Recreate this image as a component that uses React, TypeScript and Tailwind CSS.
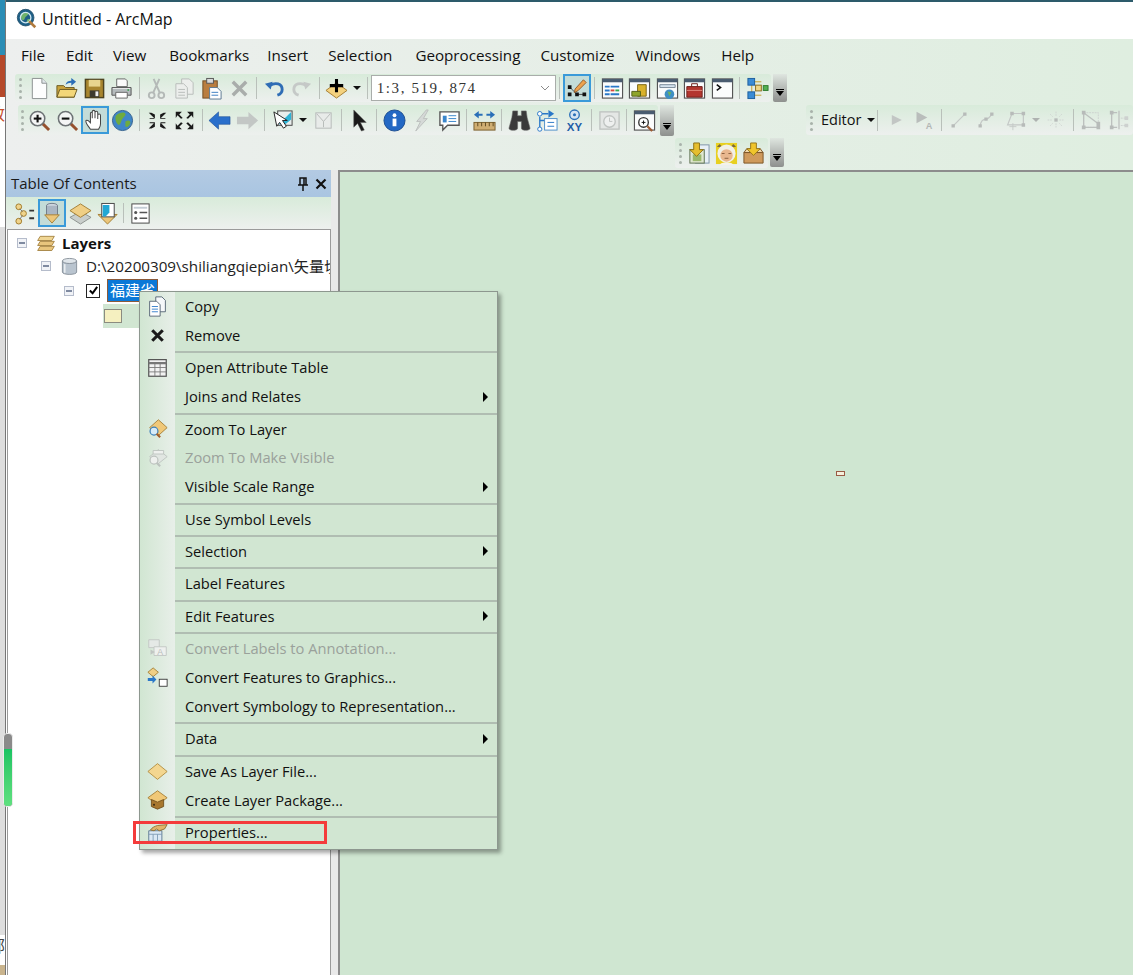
import type { ReactNode } from 'react'

function I({ children, s = 23 }: { children: ReactNode; s?: number }) {
  return (
    <svg viewBox="0 0 24 24" width={s} height={s} className="block shrink-0">
      {children}
    </svg>
  )
}

const icons: Record<string, ReactNode> = {
  logo: (
    <>
      <circle cx="11" cy="11" r="9.5" fill="#1d5f86" stroke="#24506b" />
      <path d="M5 8c3-4 8-4 9-2s-3 3-4 6-4 3-5-4zM13 13c3-1 5 0 4 2s-4 3-5 1z" fill="#6fb36b" />
      <circle cx="11" cy="11" r="6" fill="none" stroke="#cfe7f3" strokeWidth="1.5" />
      <path d="M15 15l7 7" stroke="#b07a3c" strokeWidth="3" />
    </>
  ),
  new: (
    <>
      <path d="M4.5 1.5h10l5 5v16h-15z" fill="#fdfdfd" stroke="#8a8f8f" />
      <path d="M14.5 1.5v5h5" fill="#e2e8ec" stroke="#8a8f8f" />
    </>
  ),
  open: (
    <>
      <path d="M2 21V9h7l2 2h9v10z" fill="#c9a33e" stroke="#6b5a22" />
      <path d="M2 21l3-8h18l-3 8z" fill="#f3d779" stroke="#6b5a22" />
      <path d="M11 8c1-3 3-4 6-4V1l5 4-5 4V6c-3 0-4 1-6 2z" fill="#2b6fb8" />
    </>
  ),
  save: (
    <>
      <rect x="2.5" y="2.5" width="19" height="19" fill="#a8862f" stroke="#4e4420" strokeWidth="1.5" />
      <rect x="6" y="3" width="12" height="7" fill="#e8d58e" />
      <rect x="7" y="14" width="10" height="7" fill="#3c3a30" />
      <rect x="13" y="15" width="3" height="5" fill="#eee" />
    </>
  ),
  print: (
    <>
      <path d="M7 10V2h9l2 2v6z" fill="#fafafa" stroke="#666" />
      <path d="M2 11h20v8H2z" fill="#b5bbbd" stroke="#555" />
      <path d="M6 16h12v6H6z" fill="#fff" stroke="#666" />
      <path d="M3 12h18" stroke="#e6e8e8" />
      <circle cx="19" cy="13.5" r="1" fill="#46a15a" />
    </>
  ),
  cut: (
    <g fill="none" stroke="#b4b9b7" strokeWidth="2">
      <circle cx="7" cy="19" r="3" />
      <circle cx="17" cy="19" r="3" />
      <path d="M8.5 16.5L15 2M15.5 16.5L9 2" />
    </g>
  ),
  copyOff: (
    <g fill="#eceeec" stroke="#b8bcba">
      <path d="M9 2h8l4 4v12H9z" />
      <path d="M3 7h8l4 4v11H3z" />
      <path d="M5.5 13h7M5.5 16h7M5.5 19h7" />
    </g>
  ),
  paste: (
    <>
      <rect x="3" y="4" width="15" height="18" fill="#b97d3f" stroke="#704c24" />
      <rect x="7" y="1.5" width="7" height="5" fill="#d9d9d9" stroke="#555" />
      <path d="M10 11h8l4 4v8H10z" fill="#fff" stroke="#5a7891" />
      <path d="M12 16h7M12 19h7" stroke="#3b7cc0" />
    </>
  ),
  del: <path d="M5 5l14 14M19 5L5 19" stroke="#a9adab" strokeWidth="3.6" />,
  undo: (
    <>
      <path d="M7 9c6-4 13-2 13 4 0 3-2 5-5 6" fill="none" stroke="#2f6db5" strokeWidth="3" />
      <path d="M2 7l8-2-2 8z" fill="#2f6db5" />
    </>
  ),
  redo: (
    <>
      <path d="M17 9c-6-4-13-2-13 4 0 3 2 5 5 6" fill="none" stroke="#c5c9c7" strokeWidth="3" />
      <path d="M22 7l-8-2 2 8z" fill="#c5c9c7" />
    </>
  ),
  add: (
    <>
      <path d="M12 6l11 8-11 8L1 14z" fill="#f4d27f" stroke="#a57d33" />
      <path d="M12 2v14M5 9h14" stroke="#000" strokeWidth="3.2" />
    </>
  ),
  edit: (
    <>
      <path d="M4 11l8 8h8" fill="none" stroke="#444" />
      <path d="M2 9h4v4H2zM2 17h4v4H2zM10 17h4v4h-4zM18 17h4v4h-4z" fill="#111" />
      <path d="M10 13l9-10 3 3-9 9-4 2z" fill="#eda24e" stroke="#8e5a28" />
    </>
  ),
  winA: <Win><path d="M4 9h5v2H4zM4 13h5v2H4zM4 17h5v2H4z" fill="#2a78c8" /><path d="M10 9h9v2h-9zM10 17h9v2h-9z" fill="#2a78c8" /><path d="M10 13h4v2h-4z" fill="#d9463c" /><path d="M15 13h4v2h-4z" fill="#3aa552" /></Win>,
  winB: <Win><path d="M10 8h9v12h-9z" fill="#d9b22c" stroke="#7a6415" /><path d="M4 15h9v5H4z" fill="#8fa52a" stroke="#54601a" /></Win>,
  winC: <Win><path d="M4 8h16v3H4z" fill="#d5e2ee" stroke="#7a8a99" /><circle cx="14" cy="18" r="5" fill="#3f8fc4" /><path d="M12 15l4 1-2 4z" fill="#6bb25e" /></Win>,
  winD: <Win><path d="M4 10h16v11H4z" fill="#b3362f" stroke="#6f1f1b" /><path d="M9 10V7h6v3" fill="none" stroke="#6f1f1b" /><path d="M4 14h16" stroke="#e08a80" /></Win>,
  winE: <Win><path d="M6 8l4 3-4 3" fill="none" stroke="#111" strokeWidth="1.6" /></Win>,
  model: (
    <>
      <path d="M8 5h8M8 19h8M6 8v8" stroke="#c49d2e" fill="none" />
      <rect x="2" y="1.5" width="7" height="7" fill="#3a8bd5" stroke="#1d5f9e" />
      <rect x="2" y="15.5" width="7" height="7" fill="#3a8bd5" stroke="#1d5f9e" />
      <rect x="10" y="8.5" width="6" height="6" fill="#f0d684" stroke="#8a6b1e" />
      <rect x="18" y="9" width="5" height="5" fill="#52b052" stroke="#2c7a2c" />
    </>
  ),
  zin: <Lens plus />,
  zout: <Lens />,
  hand: (
    <path
      d="M7 22c-2-3-5-6-5-9 0-1 2-1 3 0l2 2V5c0-2 2-2 2 0v5V3c0-2 3-2 3 0v7V4c0-2 3-2 3 0v7-4c0-2 3-2 3 0v9c0 3-1 4-2 6z"
      fill="#fff"
      stroke="#444"
      strokeWidth="1.1"
    />
  ),
  globe: (
    <>
      <circle cx="12" cy="12" r="10.5" fill="#3f86c8" stroke="#35618c" />
      <path d="M5 7c4-4 9-4 10-2s-3 4-4 7-2 6-4 4-3-6-2-9zM15 13c3-2 6-1 5 2s-4 5-5 3z" fill="#6fab3f" />
    </>
  ),
  fixIn: (
    <path
      d="M2 3l7 7V5L5 3zM22 3l-7 7V5l4-2zM2 21l7-7v5l-4 2zM22 21l-7-7v5l4 2zM3 9h6v1H3zM15 9h6v1h-6zM3 14h6v1H3zM15 14h6v1h-6z"
      fill="#1a1a1a"
    />
  ),
  fixOut: (
    <path
      d="M2 2h7L6 5l4 4-2 1-4-4-2 3zM22 2h-7l3 3-4 4 2 1 4-4 2 3zM2 22h7l-3-3 4-4-2-1-4 4-2-3zM22 22h-7l3-3-4-4 2-1 4 4 2-3z"
      fill="#1a1a1a"
    />
  ),
  back: <path d="M1 12l10-9v5h12v8H11v5z" fill="#2a6fcb" stroke="#1d4d94" strokeWidth=".6" />,
  forward: <path d="M23 12l-10-9v5H1v8h12v5z" fill="#c3c7c5" />,
  selEl: (
    <>
      <rect x="7" y="2" width="15" height="15" fill="#e9eeec" stroke="#444" />
      <path d="M8 16L21 3v8l-6 5z" fill="#2fb4d6" />
      <path d="M3 3l3 15 3-4 4 6 3-2-4-6h5z" fill="#fff" stroke="#222" />
    </>
  ),
  clearSel: (
    <>
      <rect x="4" y="4" width="16" height="16" fill="#e8ebe9" stroke="#b6bab8" />
      <path d="M5 5l7 8 7-8M12 13v6" fill="none" stroke="#b6bab8" />
    </>
  ),
  arrow: <path d="M6 1l13 13h-6l4 8-3 1-4-8-4 4z" fill="#1a1a1a" stroke="#555" strokeWidth=".5" />,
  info: (
    <>
      <circle cx="12" cy="12" r="11" fill="#2368c4" stroke="#1c4d8f" />
      <circle cx="12" cy="6.5" r="2" fill="#fff" />
      <path d="M10 10h4v8h-4z" fill="#fff" />
    </>
  ),
  bolt: <path d="M17 1L7 13h4L6 23l12-13h-4l5-9z" fill="#d5d9d7" stroke="#bcc0be" />,
  popup: (
    <>
      <path d="M2 3h20v14H10l-5 5v-5H2z" fill="#fff" stroke="#555" strokeWidth="1.4" />
      <path d="M5 7h4v7H5z" fill="#3a86cc" />
      <path d="M11 7h8M11 10h8M11 13h8" stroke="#3a86cc" />
    </>
  ),
  measure: (
    <>
      <path d="M1 6l5-4v3h4v2H6v3zM23 6l-5-4v3h-4v2h4v3z" fill="#2a6fb8" />
      <rect x="1" y="14" width="22" height="8" fill="#cfae72" stroke="#7a5f2c" />
      <path d="M5 14v4M9 14v4M13 14v4M17 14v4M21 14v4" stroke="#5e4820" />
    </>
  ),
  find: (
    <path
      d="M5 2h5v5h4V2h5l1 7 3 11c0 3-9 3-9 0v-7h-4v7c0 3-9 3-9 0l3-11z"
      fill="#3a3a3a"
      stroke="#666"
      strokeWidth=".6"
    />
  ),
  route: (
    <>
      <path d="M5 8v12M5 12h6M6 5h8" stroke="#2a78c8" fill="none" strokeWidth="1.4" />
      <path d="M14 1l6 4-6 4z" fill="#2a78c8" />
      <rect x="10" y="10" width="13" height="12" fill="#fff" stroke="#4e8fc9" />
      <path d="M13 14h7M13 18h7" stroke="#2a78c8" />
      <circle cx="5" cy="5" r="2.4" fill="#fff" stroke="#2a78c8" />
      <circle cx="5" cy="21" r="2.2" fill="#fff" stroke="#2a78c8" />
    </>
  ),
  xy: (
    <>
      <circle cx="12" cy="6" r="5" fill="#d5e4f2" stroke="#2a6fb8" strokeWidth="1.4" />
      <circle cx="12" cy="6" r="1.6" fill="#2a6fb8" />
      <text x="12" y="23" textAnchor="middle" fontSize="12" fontWeight="700" fill="#1f5fa8" fontFamily="Liberation Sans">XY</text>
    </>
  ),
  time: (
    <>
      <rect x="2" y="3" width="20" height="18" fill="#e4e7e5" stroke="#bfc3c1" strokeWidth="1.4" />
      <circle cx="12" cy="13" r="6" fill="#eef0ef" stroke="#bfc3c1" strokeWidth="1.4" />
      <path d="M12 9v4h3" stroke="#bfc3c1" fill="none" />
    </>
  ),
  viewer: <Win><circle cx="11" cy="14" r="5" fill="#fff" stroke="#333" strokeWidth="1.4" /><path d="M9 14h4M11 12v4" stroke="#111" /><path d="M15 18l5 5" stroke="#9c5b34" strokeWidth="2.4" /></Win>,
  dl1: (
    <>
      <rect x="9" y="3" width="14" height="19" fill="#e8f0f6" stroke="#7d93a8" />
      <rect x="3" y="8" width="15" height="14" fill="#dfe7d0" stroke="#5d6f4f" />
      <path d="M6 13h9v7H6z" fill="#9bb86c" />
      <path d="M7 1h6v7h4l-7 7-7-7h4z" fill="#e6be2e" stroke="#8d7216" />
    </>
  ),
  avatar: (
    <>
      <rect x="1" y="1" width="22" height="22" fill="#e8d021" />
      <path d="M2 5l3-3 3 4M22 5l-3-3-3 4" fill="#7b6a3a" />
      <circle cx="12" cy="12" r="9.5" fill="#f2f0e6" />
      <circle cx="12" cy="14" r="6.5" fill="#e8b78f" />
      <path d="M7 12h3M14 12h3M10 17h4" stroke="#8a5f3f" />
      <path d="M5 24c1-4 13-4 14 0z" fill="#f4f2ea" />
    </>
  ),
  box: (
    <>
      <path d="M2 11h20v11H2z" fill="#cf9a5c" stroke="#7c5527" />
      <path d="M2 11l3-4h14l3 4z" fill="#f0d6a8" stroke="#7c5527" />
      <path d="M9 1h6v6h4l-7 7-7-7h4z" fill="#f0c52c" stroke="#96771a" />
    </>
  ),
  eTri: <path d="M7 6l12 6-12 6z" fill="#c2c6c4" />,
  eTriA: (
    <>
      <path d="M3 2l13 7-13 7z" fill="#b9bdbb" />
      <text x="18" y="23" textAnchor="middle" fontSize="11" fontWeight="700" fill="#b3b7b5" fontFamily="Liberation Sans">A</text>
    </>
  ),
  eLine: (
    <>
      <path d="M5 19L19 5" stroke="#c4c8c6" strokeWidth="1.4" />
      <path d="M3 17h4v4H3zM17 3h4v4h-4z" fill="#b7bbb9" />
    </>
  ),
  eCurve: (
    <>
      <path d="M5 19c1-7 5-8 7-8s5-3 7-6" fill="none" stroke="#c4c8c6" strokeWidth="1.4" />
      <path d="M3 17h4v4H3zM10 9h4v4h-4zM17 3h4v4h-4z" fill="#b7bbb9" />
    </>
  ),
  ePoly: (
    <>
      <path d="M8 4h13v13H3z" fill="none" stroke="#c4c8c6" strokeWidth="1.4" />
      <path d="M6 2h4v4H6zM19 2h4v4h-4zM19 15h4v4h-4z" fill="#b7bbb9" />
      <path d="M9 15v8M5 19h8" stroke="#c4c8c6" />
    </>
  ),
  eStar: (
    <>
      <path d="M12 2v6M12 16v6M2 12h6M16 12h6M5 5l3 3M19 5l-3 3M5 19l3-3M19 19l-3-3" stroke="#cdd1cf" strokeDasharray="2 1" />
      <rect x="10" y="10" width="4" height="4" fill="#b7bbb9" />
    </>
  ),
  eReshape: (
    <>
      <path d="M4 4h16v16H4z" fill="none" stroke="#cdd1cf" strokeDasharray="2 1" />
      <path d="M4 4l16 12M4 4v16h16" fill="none" stroke="#bcc0be" strokeWidth="1.4" />
      <path d="M2 2h4v4H2zM2 18h4v4H2zM18 18h4v4h-4zM18 14h4v4h-4z" fill="#b7bbb9" />
    </>
  ),
  eSplit: (
    <>
      <path d="M4 4h6M4 4v16h6M12 2v20" fill="none" stroke="#bcc0be" strokeWidth="1.4" />
      <path d="M2 2h4v4H2zM2 18h4v4H2z" fill="#b7bbb9" />
      <path d="M14 10h8M14 18h8" stroke="#cdd1cf" strokeDasharray="2 1" />
      <path d="M18 8h4v4h-4zM18 16h4v4h-4z" fill="#cdd1cf" />
    </>
  ),
  tocList: (
    <>
      <circle cx="6" cy="5" r="3" fill="#f0d38a" stroke="#a17b2c" />
      <circle cx="11" cy="12" r="3" fill="#f0d38a" stroke="#a17b2c" />
      <circle cx="6" cy="20" r="3" fill="#f0d38a" stroke="#a17b2c" />
      <path d="M7 7l3 3M10 14l-3 4" stroke="#777" />
      <path d="M17 8h5v2h-5zM17 16h5v2h-5z" fill="#333" />
    </>
  ),
  tocSource: (
    <>
      <ellipse cx="12" cy="4" rx="6" ry="2.5" fill="#cdd6df" stroke="#6c7785" />
      <path d="M6 4v11c0 3 12 3 12 0V4" fill="#aab6c3" stroke="#6c7785" />
      <path d="M4 14h16l-8 9z" fill="#ecc67a" stroke="#a37e34" />
    </>
  ),
  tocVis: (
    <>
      <path d="M12 10l11 6-11 7L1 16z" fill="#c9cecb" stroke="#8d928f" />
      <path d="M12 2l11 7-11 7L1 9z" fill="#f0cf85" stroke="#a37e34" />
    </>
  ),
  tocSel: (
    <>
      <path d="M2 13h20l-10 10z" fill="#ecc67a" stroke="#a37e34" />
      <rect x="6" y="1.5" width="13" height="14" fill="#fff" stroke="#444" />
      <path d="M7 3h7v8l-4 4H7z" fill="#22a8d4" />
    </>
  ),
  tocOpt: (
    <>
      <rect x="3" y="2" width="18" height="20" fill="#fff" stroke="#444" />
      <path d="M5 5h14v2H5z" fill="#c4cdd5" />
      <circle cx="7" cy="11" r="1.6" fill="#555" />
      <circle cx="7" cy="17" r="1.6" fill="#555" />
      <path d="M11 11h8M11 17h8" stroke="#555" strokeWidth="1.4" />
    </>
  ),
  layers: (
    <>
      <path d="M5 16h17l-3 5H2z" fill="#e9c57d" stroke="#9d7b37" />
      <path d="M5 10h17l-3 5H2z" fill="#e9c57d" stroke="#9d7b37" />
      <path d="M5 4h17l-3 5H2z" fill="#f0d694" stroke="#9d7b37" />
    </>
  ),
  db: (
    <>
      <path d="M3 5v14c0 4 18 4 18 0V5" fill="#b9c4cf" stroke="#77818c" />
      <ellipse cx="12" cy="5" rx="9" ry="3.2" fill="#dfe5ea" stroke="#77818c" />
      <path d="M6 9v11" stroke="#e9edf0" strokeWidth="2" />
    </>
  ),
  mCopy: (
    <>
      <path d="M10 1h7l4 4v13H10z" fill="#f6f8fa" stroke="#4e5e6e" />
      <path d="M3 6h8l4 4v13H3z" fill="#fff" stroke="#4e5e6e" />
      <path d="M5.5 12h7M5.5 15h7M5.5 18h7" stroke="#2a78c8" />
    </>
  ),
  mDel: <path d="M6 6l12 12M18 6L6 18" stroke="#1a1a1a" strokeWidth="3.6" />,
  mTable: (
    <>
      <rect x="2" y="3" width="20" height="19" fill="#f2f2f2" stroke="#555" strokeWidth="1.4" />
      <path d="M2 7h20" stroke="#777" strokeWidth="2.6" />
      <path d="M2 12h20M2 17h20M9 7v15M15 7v15" stroke="#777" />
    </>
  ),
  mZoom: (
    <>
      <path d="M13 2l10 9-10 9L3 11z" fill="#f0c878" stroke="#a57d33" />
      <circle cx="8" cy="15" r="4.5" fill="#d7ebf7" stroke="#3a7fb8" strokeWidth="1.4" />
      <path d="M11 18l4 4" stroke="#a05d2c" strokeWidth="2.4" />
    </>
  ),
  mZoomOff: (
    <>
      <path d="M13 3l10 8-10 8L3 11z" fill="#e1e6e2" stroke="#bcc2be" />
      <path d="M7 4h12v4H7z" fill="#eef0ee" stroke="#bcc2be" />
      <circle cx="8" cy="15" r="4.5" fill="#eef0ee" stroke="#bcc2be" strokeWidth="1.4" />
      <path d="M11 18l4 4" stroke="#bcc2be" strokeWidth="2.4" />
    </>
  ),
  mAnno: (
    <>
      <path d="M2 2h12v9H2z" fill="#e5e9e6" stroke="#c0c5c2" />
      <path d="M8 10h14v10H8z" fill="#eef0ee" stroke="#c0c5c2" />
      <path d="M4 13l5 3-5 3z" fill="#c0c5c2" />
      <text x="15" y="19" textAnchor="middle" fontSize="10" fill="#b9bebb" fontFamily="Liberation Sans">A</text>
    </>
  ),
  mGfx: (
    <>
      <path d="M7 1l6 5-6 5-6-5z" fill="#f0cf85" stroke="#a37e34" />
      <rect x="14" y="14" width="9" height="8" fill="#fff" stroke="#333" />
      <path d="M1 15h6v-3l5 5-5 5v-3H1z" fill="#2a78c8" transform="translate(0 -1) scale(.9)" />
    </>
  ),
  mDiamond: <path d="M12 3l11 9-11 9L1 12z" fill="#f3d690" stroke="#b08a3c" />,
  mPack: (
    <>
      <path d="M12 2l11 8-11 8L1 10z" fill="#f0c878" stroke="#a57d33" />
      <path d="M5 12l7 3 7-3v8l-7 3-7-3z" fill="#a8772e" stroke="#6f4e1d" />
      <rect x="7" y="17" width="2" height="2" fill="#3a2a10" />
    </>
  ),
  mProps: (
    <>
      <path d="M2 10h15v12H2z" fill="#dbe8f4" stroke="#55718c" />
      <path d="M2 14h15M7 14v8M12 14v8" stroke="#7d99b3" />
      <path d="M4 9c2-3 5-4 8-5l11-1-3 5-6 2-3-2-3 2z" fill="#e0b56a" stroke="#8a6a2e" />
    </>
  ),
}

function Win({ children }: { children: ReactNode }) {
  return (
    <>
      <rect x="1.5" y="2" width="21" height="20" fill="#fbfcfc" stroke="#555" strokeWidth="1.2" />
      <rect x="1.5" y="2" width="21" height="3.5" fill="#4a5c70" />
      {children}
    </>
  )
}

function Lens({ plus }: { plus?: boolean }) {
  return (
    <>
      <path d="M15 15l7 7" stroke="#96512e" strokeWidth="3" />
      <circle cx="10" cy="10" r="7.5" fill="#f4f5f5" stroke="#6d7275" strokeWidth="1.6" />
      <path d="M6 10h8" stroke="#111" strokeWidth="2.2" />
      {plus && <path d="M10 6v8" stroke="#111" strokeWidth="2.2" />}
    </>
  )
}

function Tool({ name, s, w = 'w-[27.5px]' }: { name: string; s?: number; w?: string }) {
  return (
    <div className={`flex h-[27px] shrink-0 items-center justify-center ${w}`}>
      <I s={s}>{icons[name]}</I>
    </div>
  )
}

function Sep() {
  return (
    <div className="flex h-[27px] w-[7.5px] shrink-0 items-center justify-center">
      <div className="h-[22px] w-[1px] bg-[#b9c0ba]" />
    </div>
  )
}

function Drop({ off }: { off?: boolean }) {
  return (
    <div className="flex h-[27px] w-[13px] shrink-0 items-center justify-center">
      <div
        className={`h-0 w-0 border-x-[4px] border-t-[4px] border-x-transparent ${
          off ? 'border-t-[#aeb2b0]' : 'border-t-[#111]'
        }`}
      />
    </div>
  )
}

function Grip({ w }: { w: string }) {
  return (
    <div className={`flex shrink-0 flex-col items-center justify-center gap-[3px] ${w}`}>
      {[0, 1, 2, 3].map((i) => (
        <div key={i} className="h-[3px] w-[3px] rounded-full bg-[#a9b2ab]" />
      ))}
    </div>
  )
}

function Chevron({ h }: { h: string }) {
  return (
    <div
      className={`ml-[2px] flex w-[14px] shrink-0 flex-col items-center justify-end gap-[1px] rounded-b-[2px] bg-gradient-to-b from-[#dfe6e0] to-[#8e908e] pb-[6px] ${h}`}
    >
      <div className="h-[1px] w-[8px] bg-black" />
      <div className="h-0 w-0 border-x-[4px] border-t-[5px] border-x-transparent border-t-black" />
    </div>
  )
}

const bandClass =
  'flex shrink-0 items-center rounded-[3px] bg-gradient-to-b from-[#d8ebda] to-[#edf0ee]'

type MenuRow = { label: string; icon?: string; sub?: boolean; off?: boolean } | 'sep'

const menuRows: MenuRow[] = [
  { label: 'Copy', icon: 'mCopy' },
  { label: 'Remove', icon: 'mDel' },
  'sep',
  { label: 'Open Attribute Table', icon: 'mTable' },
  { label: 'Joins and Relates', sub: true },
  'sep',
  { label: 'Zoom To Layer', icon: 'mZoom' },
  { label: 'Zoom To Make Visible', icon: 'mZoomOff', off: true },
  { label: 'Visible Scale Range', sub: true },
  'sep',
  { label: 'Use Symbol Levels' },
  'sep',
  { label: 'Selection', sub: true },
  'sep',
  { label: 'Label Features' },
  'sep',
  { label: 'Edit Features', sub: true },
  'sep',
  { label: 'Convert Labels to Annotation...', icon: 'mAnno', off: true },
  { label: 'Convert Features to Graphics...', icon: 'mGfx' },
  { label: 'Convert Symbology to Representation...' },
  'sep',
  { label: 'Data', sub: true },
  'sep',
  { label: 'Save As Layer File...', icon: 'mDiamond' },
  { label: 'Create Layer Package...', icon: 'mPack' },
  'sep',
  { label: 'Properties...', icon: 'mProps' },
]

function ContextMenu() {
  return (
    <div className="absolute left-[139px] top-[291px] h-[559px] w-[359px] border border-[#8d978f] bg-[#d1e6d2] shadow-[3px_3px_4px_rgba(0,0,0,0.35)]">
      <div className="absolute inset-y-0 left-0 w-[35px] bg-gradient-to-r from-[#d1e6d2] to-[#e8efe9]" />
      <div className="relative">
        {menuRows.map((row, i) =>
          row === 'sep' ? (
            <div key={i} className="ml-[35px] h-[3.48px] border-b-2 border-[#b0bdb2]" />
          ) : (
            <div key={i} className="flex h-[28.9px] items-center">
              <div className="flex w-[35px] shrink-0 justify-center">
                {row.icon && <I s={21}>{icons[row.icon]}</I>}
              </div>
              <span
                className={`ml-[10px] flex-1 text-[14.7px] leading-none ${
                  row.off ? 'text-[#9aa19b]' : 'text-[#111]'
                }`}
              >
                {row.label}
              </span>
              {row.sub && (
                <div className="mr-[9px] h-0 w-0 border-y-[5px] border-l-[5px] border-y-transparent border-l-black" />
              )}
            </div>
          ),
        )}
      </div>
    </div>
  )
}

function Minus() {
  return (
    <div className="flex h-[10px] w-[10px] shrink-0 items-center justify-center border border-[#b5bccb] bg-[#f1f3f7]">
      <div className="h-[2px] w-[6px] bg-[#7f8aa0]" />
    </div>
  )
}

export default function App() {
  return (
    <div className="relative flex h-[975px] w-[1133px] overflow-hidden bg-white font-['Open_Sans',sans-serif] text-[#111]">
      {/* sliver of the desktop behind the window */}
      <div className="flex w-[5px] shrink-0 flex-col overflow-hidden bg-[#dedede]">
        <div className="h-[55px] shrink-0 bg-[#2b8db5]" />
        <div className="h-[42px] shrink-0 bg-[#b5482a]" />
        <div className="h-[40px] shrink-0 overflow-hidden bg-white">
          <span className="-ml-[11px] mt-[6px] block text-[16px] leading-[20px] text-[#c9502c] font-['Noto_Sans_CJK_SC']">致</span>
        </div>
        <div className="h-[90px] shrink-0 bg-white" />
        <div className="flex-1" />
        <div className="h-[30px] shrink-0 overflow-hidden bg-white">
          <span className="-ml-[11px] block text-[16px] leading-[20px] text-[#444] font-['Noto_Sans_CJK_SC']">部</span>
        </div>
        <div className="h-[10px] shrink-0 bg-[#c9b48d]" />
      </div>

      <div className="flex min-w-0 flex-1 flex-col border-l border-[#777]">
        <div className="h-[2px] shrink-0 bg-[#2d5b6b]" />
        <div className="flex h-[37px] shrink-0 items-center gap-[5px] bg-white pb-[4px] pl-[10px] text-[16px]">
          <I s={21}>{icons.logo}</I>
          <span>Untitled - ArcMap</span>
        </div>

        {/* menu bar + toolbars */}
        <div className="h-[131px] shrink-0 bg-gradient-to-r from-[#edefee] to-[#dfeee0]">
          <div className="flex h-[33px] items-center pl-[15px] text-[15.2px]">
            <span className="mr-[21px]">File</span>
            <span className="mr-[20px]">Edit</span>
            <span className="mr-[23px]">View</span>
            <span className="mr-[18px]">Bookmarks</span>
            <span className="mr-[20px]">Insert</span>
            <span className="mr-[23px]">Selection</span>
            <span className="mr-[20px]">Geoprocessing</span>
            <span className="mr-[21px]">Customize</span>
            <span className="mr-[21px]">Windows</span>
            <span>Help</span>
          </div>

          <div className="mt-[2px] flex h-[31px] items-start pl-[9px]">
            <div className={`${bandClass} h-[28px]`}>
              <Grip w="w-[10.25px]" />
              <Tool name="new" />
              <Tool name="open" />
              <Tool name="save" />
              <Tool name="print" />
              <Sep />
              <Tool name="cut" />
              <Tool name="copyOff" />
              <Tool name="paste" />
              <Tool name="del" />
              <Sep />
              <Tool name="undo" />
              <Tool name="redo" />
              <Sep />
              <Tool name="add" />
              <Drop />
              <Sep />
              <div className="flex h-[26px] w-[185px] shrink-0 items-center justify-between border border-[#a9adaa] bg-white pl-[5px] pr-[5px] font-['Liberation_Serif',serif] text-[15px] tracking-[1.6px] text-[#333]">
                <span>1:3, 519, 874</span>
                <svg viewBox="0 0 10 6" width="10" height="6">
                  <path d="M1 1l4 4 4-4" fill="none" stroke="#8a8a8a" />
                </svg>
              </div>
              <Sep />
              <div className="flex h-[28px] w-[27.5px] shrink-0 items-center justify-center border-2 border-[#3a9ad9] bg-[#c3dcd8]">
                <I s={22}>{icons.edit}</I>
              </div>
              <Sep />
              <Tool name="winA" />
              <Tool name="winB" />
              <Tool name="winC" />
              <Tool name="winD" />
              <Tool name="winE" />
              <Sep />
              <Tool name="model" />
            </div>
            <Chevron h="h-[28px]" />
          </div>

          <div className="flex h-[33px] items-start pl-[12px]">
            <div className={`${bandClass} h-[30px]`}>
              <Grip w="w-[8px]" />
              <Tool name="zin" />
              <Tool name="zout" />
              <div className="flex h-[28px] w-[27.5px] shrink-0 items-center justify-center border-2 border-[#3a9ad9] bg-[#c3dcd8]">
                <I s={22}>{icons.hand}</I>
              </div>
              <Tool name="globe" />
              <Sep />
              <Tool name="fixIn" s={21} />
              <Tool name="fixOut" s={21} />
              <Sep />
              <Tool name="back" />
              <Tool name="forward" />
              <Sep />
              <Tool name="selEl" />
              <Drop />
              <Tool name="clearSel" w="w-[29px]" />
              <Sep />
              <Tool name="arrow" />
              <Sep />
              <Tool name="info" />
              <Tool name="bolt" />
              <Tool name="popup" />
              <Sep />
              <Tool name="measure" />
              <Sep />
              <Tool name="find" />
              <Tool name="route" />
              <Tool name="xy" />
              <Sep />
              <Tool name="time" />
              <Sep />
              <Tool name="viewer" />
            </div>
            <Chevron h="h-[31px]" />
            <div className={`${bandClass} ml-auto h-[30px] w-[327px] overflow-hidden`}>
              <Grip w="w-[10px]" />
              <span className="ml-[5px] text-[14.5px]">Editor</span>
              <div className="ml-[3px]">
                <Drop />
              </div>
              <div className="h-[21px] w-[1px] shrink-0 bg-[#b9c0ba]" />
              <div className="w-[4px] shrink-0" />
              <Tool name="eTri" s={20} />
              <Tool name="eTriA" s={20} />
              <Sep />
              <Tool name="eLine" s={20} />
              <Tool name="eCurve" s={20} />
              <div className="w-[2px] shrink-0" />
              <Tool name="ePoly" s={21} />
              <Drop off />
              <Tool name="eStar" s={20} />
              <Sep />
              <Tool name="eReshape" s={22} />
              <Tool name="eSplit" s={22} />
            </div>
          </div>

          <div className="flex h-[31px] items-start justify-end pr-[349px]">
            <div className={`${bandClass} h-[30px] w-[93px]`}>
              <Grip w="w-[10px]" />
              <Tool name="dl1" />
              <Tool name="avatar" />
              <Tool name="box" />
            </div>
            <Chevron h="h-[29px]" />
          </div>
        </div>

        <div className="flex min-h-0 flex-1">
          {/* table of contents */}
          <div className="flex w-[325px] shrink-0 flex-col">
            <div className="flex h-[27px] shrink-0 items-center justify-between bg-gradient-to-b from-[#b3cae3] to-[#a9c5e1] pl-[5px] pr-[4px] text-[15px] text-[#1a1a1a]">
              <span>Table Of Contents</span>
              <div className="flex items-center gap-[6px]">
                <svg viewBox="0 0 12 14" width="12" height="14">
                  <path d="M3 1h6v7H3zM1 8h10M6 8v6M7 1v7" fill="none" stroke="#111" strokeWidth="1.5" />
                </svg>
                <svg viewBox="0 0 12 12" width="12" height="12">
                  <path d="M1.5 1.5l9 9M10.5 1.5l-9 9" stroke="#111" strokeWidth="2.2" />
                </svg>
              </div>
            </div>
            <div className="flex h-[32px] shrink-0 items-center bg-gradient-to-b from-[#d8ebda] to-[#edf0ee] pl-[5px]">
              <Tool name="tocList" w="w-[27px]" />
              <div className="flex h-[28px] w-[28px] shrink-0 items-center justify-center border-2 border-[#3a9ad9] bg-[#c3dcd8]">
                <I s={22}>{icons.tocSource}</I>
              </div>
              <Tool name="tocVis" w="w-[28px]" />
              <Tool name="tocSel" w="w-[27px]" />
              <div className="ml-[2px] mr-[3px] h-[20px] w-[1px] bg-[#b9c0ba]" />
              <Tool name="tocOpt" w="w-[27px]" />
            </div>
            <div className="ml-[1px] flex-1 border border-b-0 border-[#9a9a9a] bg-white pl-[9px] pt-[2px]">
              <div className="flex h-[22px] items-center">
                <Minus />
                <div className="ml-[9px]">
                  <I s={20}>{icons.layers}</I>
                </div>
                <span className="ml-[6px] text-[15px] font-bold">Layers</span>
              </div>
              <div className="flex h-[24px] items-center overflow-hidden whitespace-nowrap pl-[24px]">
                <Minus />
                <div className="ml-[9px]">
                  <I s={19}>{icons.db}</I>
                </div>
                <span className="ml-[7px] font-['Open_Sans','Noto_Sans_CJK_SC',sans-serif] text-[15.2px] text-[#222]">
                  D:\20200309\shiliangqiepian\矢量切片
                </span>
              </div>
              <div className="flex h-[25px] items-center pl-[47px]">
                <Minus />
                <div className="ml-[12px] flex h-[14px] w-[14px] shrink-0 items-center justify-center border border-[#222] bg-white">
                  <svg viewBox="0 0 12 12" width="11" height="11">
                    <path d="M2 6l3 3 5-7" fill="none" stroke="#000" strokeWidth="2.2" />
                  </svg>
                </div>
                <span className="ml-[7px] flex h-[23px] items-center border border-[#8a5a3a] bg-[#0a78d7] px-[2px] font-['Noto_Sans_CJK_SC',sans-serif] text-[15px] text-white">
                  福建省
                </span>
              </div>
              <div className="ml-[86px] mt-[1px] flex h-[24px] w-[100px] items-center bg-[#d1e6d2] pl-[1px]">
                <div className="h-[14px] w-[18px] border border-[#8b8b80] bg-[#f5f0c0]" />
              </div>
            </div>
          </div>

          {/* splitter */}
          <div className="w-[7px] shrink-0 bg-[#e9e9e9]" />

          {/* map */}
          <div className="relative flex-1 border-l-2 border-t-2 border-[#8c8c8c] bg-[#cfe6d1]">
            <div className="absolute left-[496px] top-[299px] h-[5px] w-[9px] border border-[#9a5b45] bg-[#f5f0dc]" />
          </div>
        </div>
      </div>

      {/* green gadget of another program, over the window edge */}
      <div className="absolute left-[3px] top-[733px] flex h-[74px] w-[10px] flex-col overflow-hidden rounded-[4px] border border-[#ececec] bg-[#8a8a8a]">
        <div className="mt-[15px] flex-1 bg-gradient-to-b from-[#17c463] to-[#5fe07f]" />
      </div>

      <ContextMenu />

      {/* red annotation around Properties */}
      <div className="absolute left-[133px] top-[821px] h-[23px] w-[194px] border-[3px] border-[#f43b3b]" />
    </div>
  )
}
